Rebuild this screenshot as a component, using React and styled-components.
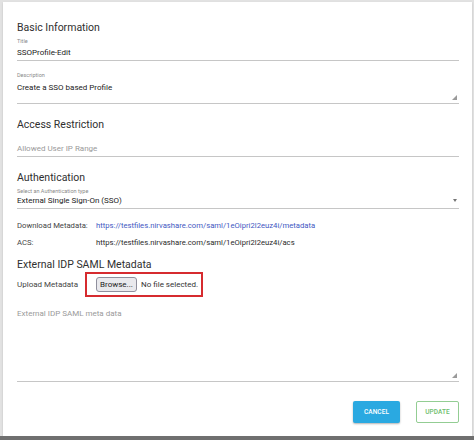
import React from "react";
import styled, { createGlobalStyle } from "styled-components";

const Global = createGlobalStyle`
  html, body { margin: 0; padding: 0; background: #e2e2e2; }
  body { font-family: Roboto, "Liberation Sans", Arial, sans-serif; }
  * { box-sizing: border-box; }
`;

const Page = styled.div`
  width: 474px;
  height: 440px;
  display: flex;
  flex-direction: column;
  padding: 2px 2px 0 3px;
  background: #e2e2e2;
`;

const Card = styled.div`
  flex: 1;
  background: #fff;
  padding: 20px 13px 13px 14px;
  display: flex;
  flex-direction: column;
  box-shadow: 0 1px 2px rgba(0,0,0,0.15);
`;

const BottomBar = styled.div`
  height: 4px;
  margin: 0 -2px 0 -3px;
  background: #6f6f6f;
`;

const Heading = styled.h2`
  margin: ${p => p.$mt || 0}px 0 0;
  font-size: 10.5px;
  line-height: 12px;
  font-weight: 400;
  color: #2f2f2f;
`;

const Field = styled.div`
  margin-top: ${p => p.$mt || 0}px;
  display: flex;
  flex-direction: column;
  border-bottom: 1px solid #c6c6c6;
  position: relative;
`;

const Label = styled.div`
  font-size: 5.5px;
  line-height: 7px;
  color: #8a8a8a;
  margin-bottom: ${p => p.$gap ?? 3}px;
`;

const Value = styled.div`
  font-size: 8px;
  line-height: 10px;
  color: ${p => (p.$placeholder ? "#9a9a9a" : "#222")};
  min-height: ${p => p.$h || 10}px;
  padding-bottom: 2px;
`;

const Grip = styled.svg`
  position: absolute;
  right: 2px;
  bottom: 3px;
  width: 5px;
  height: 5px;
`;

const Arrow = styled.span`
  position: absolute;
  right: 2px;
  bottom: 6px;
  width: 0;
  height: 0;
  border-left: 2.5px solid transparent;
  border-right: 2.5px solid transparent;
  border-top: 3px solid #757575;
`;

const InfoRows = styled.div`
  margin-top: 8px;
  display: flex;
  flex-direction: column;
`;

const InfoRow = styled.div`
  display: flex;
  font-size: 7.7px;
  line-height: 17px;
  color: #333;
`;

const InfoKey = styled.span`
  width: 79px;
  color: #444;
`;

const InfoValue = styled.span`
  color: ${p => (p.$link ? "#4358c2" : "#2a2a2a")};
`;

const UploadRow = styled.div`
  margin-top: 1px;
  display: flex;
  align-items: center;
  font-size: 8px;
  color: #444;
`;

const UploadLabel = styled.span`
  width: 68px;
`;

const Highlight = styled.div`
  width: 118px;
  height: 25px;
  border: 2px solid #d62b2f;
  display: flex;
  align-items: center;
  padding-left: 9px;
  gap: 4px;
`;

const BrowseButton = styled.button`
  width: 41px;
  height: 15px;
  padding: 0;
  font-family: Roboto, "Liberation Sans", Arial, sans-serif;
  font-size: 8px;
  color: #222;
  background: #e9e9ed;
  border: 1px solid #8f8f9d;
  border-radius: 3px;
`;

const FileText = styled.span`
  font-size: 8px;
  color: #333;
`;

const Actions = styled.div`
  margin-top: auto;
  display: flex;
  justify-content: flex-end;
  gap: 16px;
`;

const Button = styled.button`
  height: 22px;
  width: ${p => p.$w}px;
  padding: 0;
  font-family: Roboto, "Liberation Sans", Arial, sans-serif;
  font-size: 6.5px;
  font-weight: 500;
  letter-spacing: 0.1px;
  border-radius: 2px;
  ${p =>
    p.$primary
      ? `background: #2aa9e1; color: #fff; border: none; box-shadow: 0 1px 2px rgba(0,0,0,0.3);`
      : `background: #fff; color: #6cbd6c; border: 1px solid #93cd93;`}
`;

const ResizeGrip = () => (
  <Grip viewBox="0 0 5 5">
    <path d="M5 0 L5 5 L0 5 Z" fill="#9a9a9a" />
  </Grip>
);

export default function App() {
  return (
    <>
      <Global />
      <Page>
        <Card>
          <Heading>Basic Information</Heading>
          <Field $mt={4}>
            <Label>Title</Label>
            <Value>SSOProfile-Edit</Value>
          </Field>
          <Field $mt={11}>
            <Label $gap={4}>Description</Label>
            <Value $h={20}>Create a SSO based Profile</Value>
            <ResizeGrip />
          </Field>

          <Heading $mt={15}>Access Restriction</Heading>
          <Field $mt={13}>
            <Value $placeholder>Allowed User IP Range</Value>
          </Field>

          <Heading $mt={15}>Authentication</Heading>
          <Field $mt={4}>
            <Label $gap={1}>Select an Authentication type</Label>
            <Value>External Single Sign-On (SSO)</Value>
            <Arrow />
          </Field>

          <InfoRows>
            <InfoRow>
              <InfoKey>Download Metadata:</InfoKey>
              <InfoValue $link>https://testfiles.nirvashare.com/saml/1eOipri2l2euz4i/metadata</InfoValue>
            </InfoRow>
            <InfoRow>
              <InfoKey>ACS:</InfoKey>
              <InfoValue>https://testfiles.nirvashare.com/saml/1eOipri2l2euz4i/acs</InfoValue>
            </InfoRow>
          </InfoRows>

          <Heading $mt={8}>External IDP SAML Metadata</Heading>
          <UploadRow>
            <UploadLabel>Upload Metadata</UploadLabel>
            <Highlight>
              <BrowseButton>Browse...</BrowseButton>
              <FileText>No file selected.</FileText>
            </Highlight>
          </UploadRow>

          <Field $mt={12}>
            <Value $placeholder $h={72}>External IDP SAML meta data</Value>
            <ResizeGrip />
          </Field>

          <Actions>
            <Button $primary $w={47}>CANCEL</Button>
            <Button $w={43}>UPDATE</Button>
          </Actions>
        </Card>
        <BottomBar />
      </Page>
    </>
  );
}
